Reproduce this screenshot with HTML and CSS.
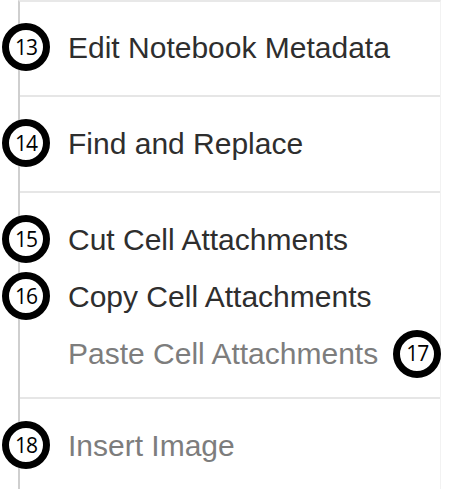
FILE: index.html
```html
<!DOCTYPE html>
<html>
<head>
<meta charset="utf-8">
<link rel="stylesheet" href="styles.css">
</head>
<body>
<div class="menu">
  <ul class="list">
    <li class="item"><span class="badge badge-left">13</span><span class="label">Edit Notebook Metadata</span></li>
    <li class="sep"></li>
    <li class="item"><span class="badge badge-left">14</span><span class="label">Find and Replace</span></li>
    <li class="sep"></li>
    <li class="item"><span class="badge badge-left">15</span><span class="label">Cut Cell Attachments</span></li>
    <li class="item"><span class="badge badge-left">16</span><span class="label">Copy Cell Attachments</span></li>
    <li class="item disabled"><span class="label">Paste Cell Attachments</span><span class="badge badge-inline">17</span></li>
    <li class="sep sep-tight"></li>
    <li class="item disabled"><span class="badge badge-left">18</span><span class="label">Insert Image</span></li>
  </ul>
</div>
</body>
</html>
```

FILE: styles.css
```css
html, body {
  margin: 0;
  padding: 0;
  background: #ffffff;
}
body {
  width: 458px;
  height: 489px;
  overflow: hidden;
}
.menu {
  margin-left: 18px;
  width: 423px;
  height: 489px;
  border-left: 2px solid #cfcfcf;
  border-top: 2px solid #e8e8e8;
  border-right: 1px solid #f2f2f2;
  box-sizing: border-box;
  background: #ffffff;
}
.list {
  list-style: none;
  margin: 0;
  padding: 17px 0 0 0;
}
.item {
  position: relative;
  height: 57px;
  display: flex;
  align-items: center;
  padding-left: 48px;
  font-family: "Liberation Sans", Arial, sans-serif;
  font-size: 30px;
  color: #2e2e2e;
  white-space: nowrap;
}
.item.disabled {
  color: #7d7d7d;
}
.sep {
  height: 2px;
  background: #e6e6e6;
  margin: 19px 0 18px 0;
}
.sep-tight {
  margin-top: 15px;
}
.badge {
  width: 48px;
  height: 48px;
  box-sizing: border-box;
  border: 7px solid #000000;
  border-radius: 50%;
  background: #ffffff;
  color: #000000;
  font-family: "Open Sans", "Noto Sans", sans-serif;
  font-size: 21px;
  letter-spacing: -1px;
  display: flex;
  align-items: center;
  justify-content: center;
  line-height: 1;
}
.badge-left {
  position: absolute;
  left: -18px;
  top: 4px;
}
.badge-inline {
  margin-left: 15px;
  flex: none;
}
```
